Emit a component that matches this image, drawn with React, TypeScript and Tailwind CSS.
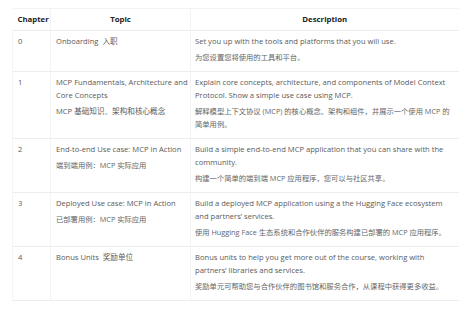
import React from "react";

type Row = {
  chapter: string;
  topic: string[];
  desc: string[];
};

const rows: Row[] = [
  {
    chapter: "0",
    topic: ["Onboarding\u00a0\u00a0入职"],
    desc: ["Set you up with the tools and platforms that you will use.", "为您设置您将使用的工具和平台。"],
  },
  {
    chapter: "1",
    topic: ["MCP Fundamentals, Architecture and Core Concepts", "MCP 基础知识、架构和核心概念"],
    desc: [
      "Explain core concepts, architecture, and components of Model Context Protocol. Show a simple use case using MCP.",
      "解释模型上下文协议 (MCP) 的核心概念、架构和组件，并展示一个使用 MCP 的简单用例。",
    ],
  },
  {
    chapter: "2",
    topic: ["End-to-end Use case: MCP in Action", "端到端用例：MCP 实际应用"],
    desc: [
      "Build a simple end-to-end MCP application that you can share with the community.",
      "构建一个简单的端到端 MCP 应用程序，您可以与社区共享。",
    ],
  },
  {
    chapter: "3",
    topic: ["Deployed Use case: MCP in Action", "已部署用例：MCP 实际应用"],
    desc: [
      "Build a deployed MCP application using a the Hugging Face ecosystem and partners\u2019 services.",
      "使用 Hugging Face 生态系统和合作伙伴的服务构建已部署的 MCP 应用程序。",
    ],
  },
  {
    chapter: "4",
    topic: ["Bonus Units\u00a0\u00a0奖励单位"],
    desc: [
      "Bonus units to help you get more out of the course, working with partners\u2019 libraries and services.",
      "奖励单元可帮助您与合作伙伴的图书馆和服务合作，从课程中获得更多收益。",
    ],
  },
];

const isCjk = (s: string) => /^[\u4e00-\u9fff]/.test(s);

function Para({ text }: { text: string }) {
  return (
    <p
      className={
        isCjk(text)
          ? "mb-[3px] text-[7.3px] leading-[13px] text-[#666]"
          : "mb-[3px] text-[7.6px] leading-[13px] text-[#5a5a5a]"
      }
    >
      {text}
    </p>
  );
}

export default function App() {
  return (
    <div
      className="w-[474px] h-[314px] bg-white pt-[8px] pl-[12px]"
      style={{ fontFamily: '"Open Sans", "Noto Sans CJK SC", sans-serif' }}
    >
      <table className="w-[446px] border-collapse table-fixed">
        <colgroup>
          <col className="w-[38px]" />
          <col className="w-[140px]" />
          <col className="w-[268px]" />
        </colgroup>
        <thead>
          <tr className="h-[22px] border-t border-[#f3f3f3]">
            <th className="px-[5px] text-left text-[7.8px] font-bold text-[#222]">Chapter</th>
            <th className="px-[5px] text-center text-[7.8px] font-bold text-[#222] border-l border-[#f3f3f3]">Topic</th>
            <th className="px-[5px] text-center text-[7.8px] font-bold text-[#222] border-l border-[#f3f3f3]">Description</th>
          </tr>
        </thead>
        <tbody>
          {rows.map(r => (
            <tr key={r.chapter} className="border-t border-[#ededed] align-top">
              <td className="px-[5px] pt-[4px] pb-[4px] border-l border-[#f5f5f5]">
                <Para text={r.chapter} />
              </td>
              <td className="pl-[5px] pr-[2px] pt-[4px] pb-[4px] border-l border-[#f3f3f3]">
                {r.topic.map(t => (
                  <Para key={t} text={t} />
                ))}
              </td>
              <td className="pl-[4px] pr-[3px] pt-[4px] pb-[4px] border-l border-[#f3f3f3]">
                {r.desc.map(t => (
                  <Para key={t} text={t} />
                ))}
              </td>
            </tr>
          ))}
          <tr className="border-t border-[#ededed]">
            <td colSpan={3}></td>
          </tr>
        </tbody>
      </table>
    </div>
  );
}
